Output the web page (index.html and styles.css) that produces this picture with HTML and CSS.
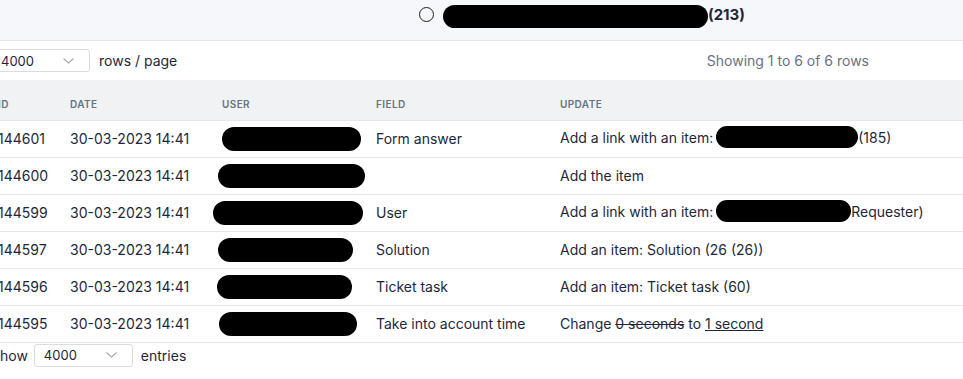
FILE: index.html
```html
<!DOCTYPE html>
<html lang="en">
<head>
    <meta charset="UTF-8">
    <meta name="viewport" content="width=device-width, initial-scale=1.0">
    <title>History</title>
    <link rel="stylesheet" href="styles.css">
</head>
<body>
    <div class="page">
        <!-- Title bar -->
        <div class="title-bar">
            <span class="radio"></span>
            <span class="redact title-redact"></span>
            <span class="count">(213)</span>
        </div>

        <!-- Rows per page -->
        <div class="toolbar">
            <div class="pager">
                <div class="select wide">
                    <span>4000</span>
                    <svg class="chevron" width="11" height="6" viewBox="0 0 11 6"><path d="M0.5 0.5 L5.5 5 L10.5 0.5" fill="none" stroke="#a3a9b3" stroke-width="1.1"/></svg>
                </div>
                <span>rows / page</span>
            </div>
            <div class="info">Showing 1 to 6 of 6 rows</div>
        </div>

        <table class="history">
            <colgroup>
                <col style="width: 77px">
                <col style="width: 152px">
                <col style="width: 154px">
                <col style="width: 184px">
                <col>
            </colgroup>
            <thead>
                <tr>
                    <th>ID</th>
                    <th>Date</th>
                    <th>User</th>
                    <th>Field</th>
                    <th>Update</th>
                </tr>
            </thead>
            <tbody>
                <tr>
                    <td>144601</td>
                    <td>30-03-2023 14:41</td>
                    <td><span class="redact user" style="width: 139px"></span></td>
                    <td>Form answer</td>
                    <td>Add a link with an item:<span class="redact inline" style="width: 142px"></span>(185)</td>
                </tr>
                <tr>
                    <td>144600</td>
                    <td>30-03-2023 14:41</td>
                    <td><span class="redact user" style="width: 147px; margin-left: -4px"></span></td>
                    <td></td>
                    <td>Add the item</td>
                </tr>
                <tr>
                    <td>144599</td>
                    <td>30-03-2023 14:41</td>
                    <td><span class="redact user" style="width: 150px; margin-left: -9px"></span></td>
                    <td>User</td>
                    <td>Add a link with an item:<span class="redact inline" style="width: 135px"></span>Requester)</td>
                </tr>
                <tr>
                    <td>144597</td>
                    <td>30-03-2023 14:41</td>
                    <td><span class="redact user" style="width: 135px; margin-left: -4px"></span></td>
                    <td>Solution</td>
                    <td>Add an item: Solution (26 (26))</td>
                </tr>
                <tr>
                    <td>144596</td>
                    <td>30-03-2023 14:41</td>
                    <td><span class="redact user" style="width: 135px; margin-left: -5px"></span></td>
                    <td>Ticket task</td>
                    <td>Add an item: Ticket task (60)</td>
                </tr>
                <tr>
                    <td>144595</td>
                    <td>30-03-2023 14:41</td>
                    <td><span class="redact user" style="width: 138px; margin-left: -3px"></span></td>
                    <td>Take into account time</td>
                    <td>Change <del>0 seconds</del> to <a href="#">1 second</a></td>
                </tr>
            </tbody>
        </table>

        <!-- Entries -->
        <div class="footer">
            <span>Show</span>
            <div class="select">
                <span>4000</span>
                <svg class="chevron" width="11" height="6" viewBox="0 0 11 6"><path d="M0.5 0.5 L5.5 5 L10.5 0.5" fill="none" stroke="#a3a9b3" stroke-width="1.1"/></svg>
            </div>
            <span>entries</span>
        </div>
    </div>
</body>
</html>
```

FILE: styles.css
```css
body {
    margin: 0;
    background-color: #fff;
    font-family: 'Inter', 'Liberation Sans', sans-serif;
    font-size: 14px;
    color: #1d273b;
    overflow: hidden;
}

.page {
    margin-left: -19px;
    width: 1000px;
}

.title-bar {
    display: flex;
    align-items: center;
    height: 40px;
    padding-left: 438px;
    background-color: #f5f7fb;
    border-bottom: 1px solid #e6e7e9;
}

.radio {
    width: 13px;
    height: 13px;
    border: 1.5px solid #1d1d1d;
    border-radius: 50%;
    margin-top: -12px;
    margin-right: 9px;
}

.redact {
    display: inline-block;
    background-color: #000;
    border-radius: 12px;
    vertical-align: middle;
}

.title-redact {
    width: 265px;
    height: 23px;
    margin-top: -7px;
}

.count {
    font-size: 15px;
    font-weight: 700;
    margin-top: -12px;
}

.toolbar {
    display: flex;
    align-items: center;
    justify-content: space-between;
    height: 39px;
    padding-left: 12px;
    padding-right: 112px;
}

.pager {
    display: flex;
    align-items: center;
    gap: 9px;
}

.info {
    color: #667382;
}

.select {
    display: flex;
    align-items: center;
    justify-content: space-between;
    box-sizing: border-box;
    width: 99px;
    height: 23px;
    padding: 0 15px 0 9px;
    border: 1px solid #dadcde;
    border-radius: 3px;
    background-color: #fff;
    font-size: 13px;
}

.select.wide {
    width: 97px;
    padding-left: 7px;
}

.history {
    border-collapse: collapse;
    table-layout: fixed;
    width: 100%;
}

.history th {
    height: 40px;
    box-sizing: border-box;
    padding: 9px 12px 0;
    background-color: #f1f2f4;
    border-bottom: 1px solid #e6e7e9;
    color: #667382;
    font-size: 10px;
    font-weight: 600;
    letter-spacing: 0.04em;
    text-transform: uppercase;
    text-align: left;
}

.history td {
    height: 36px;
    padding: 0 12px;
    border-bottom: 1px solid #e6e7e9;
    white-space: nowrap;
    vertical-align: middle;
}

.history th:first-child,
.history td:first-child {
    padding-left: 17px;
}

.redact.user {
    height: 24px;
}

.redact.inline {
    height: 22px;
    margin: -3px 0 0 3px;
}

del {
    text-decoration-thickness: 1px;
}

a {
    color: #1d273b;
    text-decoration: underline;
}

.footer {
    display: flex;
    align-items: center;
    gap: 6px;
    padding: 1px 0 0 10px;
}

.footer .select {
    margin-right: 2px;
}
```
